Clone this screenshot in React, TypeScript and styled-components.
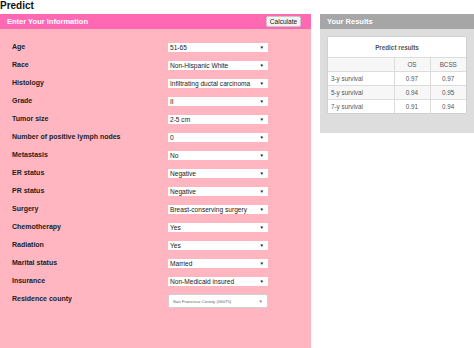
import styled, { createGlobalStyle } from "styled-components";

const GlobalStyle = createGlobalStyle`
    html, body {
        margin: 0;
        padding: 0;
        background: #ffffff;
        font-family: "Liberation Sans", Arial, sans-serif;
    }
`;

const Page = styled.div`
    width: 474px;
    height: 348px;
    overflow: hidden;
`;

const Title = styled.h1`
    margin: 0;
    height: 14px;
    font-size: 10px;
    line-height: 12px;
    font-weight: bold;
    color: #111;
`;

const Columns = styled.div`
    display: flex;
    align-items: flex-start;
    gap: 9px;
`;

const Panel = styled.section<{ $width?: number }>`
    ${(p) => (p.$width ? `width: ${p.$width}px;` : "flex: 1;")}
`;

const PanelHeader = styled.div<{ $bg: string }>`
    height: 15px;
    background: ${(p) => p.$bg};
    display: flex;
    align-items: center;
    justify-content: space-between;
    padding: 0 10px 0 7px;
    color: #fff;
    font-size: 7.5px;
    font-weight: bold;
`;

const CalcButton = styled.button`
    height: 11px;
    width: 35px;
    padding: 0;
    font-family: inherit;
    font-size: 6.6px;
    color: #222;
    background: #f2f2f2;
    border: 1px solid #c8c8c8;
    border-radius: 2px;
`;

const FormBody = styled.div`
    background: #ffb6c1;
    height: 319px;
    padding: 14px 0 0 12px;
    box-sizing: border-box;
`;

const FieldRow = styled.div`
    display: flex;
    height: 18px;
`;

const Label = styled.div`
    width: 156px;
    margin-top: -1px;
    font-size: 7px;
    line-height: 9px;
    font-weight: bold;
    color: #222;
`;

const Select = styled.div<{ $tall?: boolean }>`
    width: 100px;
    height: ${(p) => (p.$tall ? 14 : 9)}px;
    margin-top: ${(p) => (p.$tall ? -1 : 0)}px;
    box-sizing: border-box;
    background: #fff;
    display: flex;
    align-items: center;
    justify-content: space-between;
    padding: 0 4px 0 ${(p) => (p.$tall ? 4 : 2)}px;
    font-size: ${(p) => (p.$tall ? 4.3 : 6.6)}px;
    color: ${(p) => (p.$tall ? "#666" : "#222")};
    border: ${(p) => (p.$tall ? "1px solid #d0d0d0" : "none")};
    border-radius: ${(p) => (p.$tall ? 2 : 0)}px;
`;

const Arrow = styled.span<{ $muted?: boolean }>`
    font-size: 4.5px;
    color: ${(p) => (p.$muted ? "#888" : "#111")};
`;

const ResultsBody = styled.div`
    background: #dddddd;
    padding: 8px 8px 20px;
`;

const Table = styled.table`
    width: 138px;
    border-collapse: collapse;
    background: #fff;
    font-size: 6.3px;
    color: #555;
    box-shadow: 0 0 1px rgba(0, 0, 0, 0.35);
`;

const Caption = styled.td`
    height: 20px;
    text-align: center;
    font-weight: bold;
    color: #555;
    padding: 0;
`;

const Cell = styled.td<{ $first?: boolean; $shade?: boolean }>`
    height: 13px;
    padding: 0 0 0 ${(p) => (p.$first ? 3 : 0)}px;
    text-align: ${(p) => (p.$first ? "left" : "center")};
    border-top: 1px solid #dcdcdc;
    border-left: ${(p) => (p.$first ? "none" : "1px solid #dcdcdc")};
    background: ${(p) => (p.$shade ? "#f7f7f7" : "#fff")};
`;

const fields: [string, string][] = [
    ["Age", "51-65"],
    ["Race", "Non-Hispanic White"],
    ["Histology", "Infiltrating ductal carcinoma"],
    ["Grade", "II"],
    ["Tumor size", "2-5 cm"],
    ["Number of positive lymph nodes", "0"],
    ["Metastasis", "No"],
    ["ER status", "Negative"],
    ["PR status", "Negative"],
    ["Surgery", "Breast-conserving surgery"],
    ["Chemotherapy", "Yes"],
    ["Radiation", "Yes"],
    ["Marital status", "Married"],
    ["Insurance", "Non-Medicaid insured"],
];

const results: [string, string, string][] = [
    ["3-y survival", "0.97", "0.97"],
    ["5-y survival", "0.94", "0.95"],
    ["7-y survival", "0.91", "0.94"],
];

export default function App() {
    return (
        <Page>
            <GlobalStyle />
            <Title>Predict</Title>
            <Columns>
                <Panel $width={311}>
                    <PanelHeader $bg="#ff69b4">
                        Enter Your Information
                        <CalcButton>Calculate</CalcButton>
                    </PanelHeader>
                    <FormBody>
                        {fields.map(([label, value]) => (
                            <FieldRow key={label}>
                                <Label>{label}</Label>
                                <Select>
                                    {value}
                                    <Arrow>▼</Arrow>
                                </Select>
                            </FieldRow>
                        ))}
                        <FieldRow>
                            <Label>Residence county</Label>
                            <Select $tall>
                                San Francisco County (06075)
                                <Arrow $muted>▼</Arrow>
                            </Select>
                        </FieldRow>
                    </FormBody>
                </Panel>
                <Panel>
                    <PanelHeader $bg="#a6a6a6">Your Results</PanelHeader>
                    <ResultsBody>
                        <Table>
                            <colgroup>
                                <col style={{ width: 66 }} />
                                <col style={{ width: 36 }} />
                                <col style={{ width: 36 }} />
                            </colgroup>
                            <tbody>
                                <tr>
                                    <Caption colSpan={3}>Predict results</Caption>
                                </tr>
                                <tr>
                                    <Cell $first $shade></Cell>
                                    <Cell $shade>OS</Cell>
                                    <Cell $shade>BCSS</Cell>
                                </tr>
                                {results.map(([name, os, bcss], i) => (
                                    <tr key={name}>
                                        <Cell $first $shade={i % 2 === 1}>{name}</Cell>
                                        <Cell $shade={i % 2 === 1}>{os}</Cell>
                                        <Cell $shade={i % 2 === 1}>{bcss}</Cell>
                                    </tr>
                                ))}
                            </tbody>
                        </Table>
                    </ResultsBody>
                </Panel>
            </Columns>
        </Page>
    );
}
